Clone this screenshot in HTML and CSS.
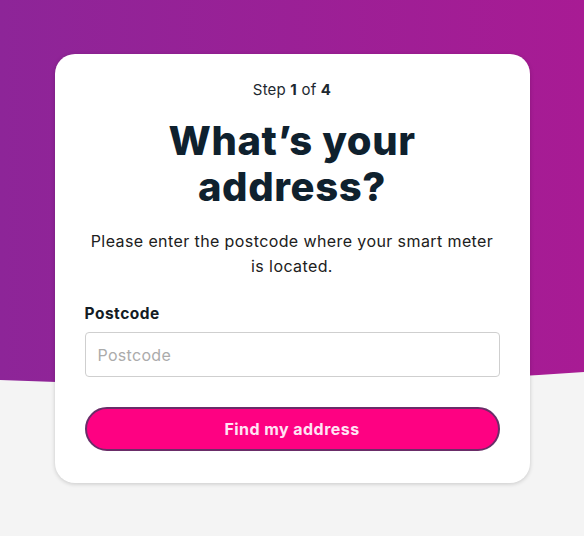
FILE: index.html
```html
<!DOCTYPE html>
<html lang="en">
<head>
<meta charset="utf-8">
<title>What's your address?</title>
<link rel="stylesheet" href="styles.css">
</head>
<body>
<div class="hero-bg">
  <svg viewBox="0 0 584 400" preserveAspectRatio="none" width="584" height="400">
    <defs>
      <linearGradient id="g" x1="0" y1="0" x2="1" y2="0">
        <stop offset="0" stop-color="#8d2598"/>
        <stop offset="1" stop-color="#a81b94"/>
      </linearGradient>
    </defs>
    <path d="M0 0 H584 V372 Q300 392 0 380 Z" fill="url(#g)"/>
  </svg>
</div>
<main class="page">
  <section class="card">
    <p class="step">Step <b>1</b> of <b>4</b></p>
    <h1 class="title">What’s your address?</h1>
    <p class="intro">Please enter the postcode where your smart meter is located.</p>
    <form class="form">
      <label class="label" for="postcode">Postcode</label>
      <input class="input" id="postcode" type="text" placeholder="Postcode">
      <button class="button" type="button">Find my address</button>
    </form>
  </section>
</main>
</body>
</html>
```
FILE: styles.css
```css
* { box-sizing: border-box; }
html, body { margin: 0; padding: 0; }
body {
  background: #f4f4f4;
  font-family: "Inter", "Open Sans", sans-serif;
  color: #1b2a35;
  width: 584px;
  height: 536px;
  overflow: hidden;
  position: relative;
}
.hero-bg {
  position: absolute;
  top: 0;
  left: 0;
  width: 584px;
  height: 400px;
  z-index: 0;
}
.hero-bg svg { display: block; }
.page {
  position: relative;
  z-index: 1;
  display: flex;
  justify-content: center;
  padding-top: 54px;
}
.card {
  width: 475px;
  background: #fff;
  border-radius: 20px;
  box-shadow: 0 1px 4px rgba(0,0,0,0.18);
  padding: 25px 30px 32px;
  text-align: center;
}
.step {
  margin: 0;
  font-size: 15px;
  line-height: 22px;
  letter-spacing: 0.2px;
  color: #1d2830;
}
.step b { font-weight: 700; }
.title {
  margin: 17px 0 0;
  font-size: 40px;
  line-height: 46px;
  font-weight: 800;
  letter-spacing: 0.6px;
  color: #0f212e;
  padding: 0 50px;
}
.intro {
  margin: 19px 0 0;
  padding: 0 3px;
  font-size: 16px;
  line-height: 25px;
  letter-spacing: 0.4px;
  color: #202020;
}
.form {
  margin-top: 24px;
  display: flex;
  flex-direction: column;
  text-align: left;
}
.label {
  font-size: 15.5px;
  line-height: 22px;
  font-weight: 700;
  letter-spacing: 0.5px;
  color: #131c24;
}
.input {
  margin-top: 7px;
  height: 45px;
  width: 100%;
  border: 1px solid #cfcfcf;
  border-radius: 4px;
  padding: 0 12px;
  font-family: inherit;
  font-size: 16px;
  letter-spacing: 0.3px;
  color: #222;
}
.input::placeholder { color: #ababab; }
.button {
  margin-top: 30px;
  height: 44px;
  width: 100%;
  border: 2px solid #6a2d68;
  border-radius: 22px;
  background: #fe0182;
  color: #ffe4f4;
  font-family: inherit;
  font-size: 16px;
  font-weight: 700;
  letter-spacing: 0.45px;
}
```
